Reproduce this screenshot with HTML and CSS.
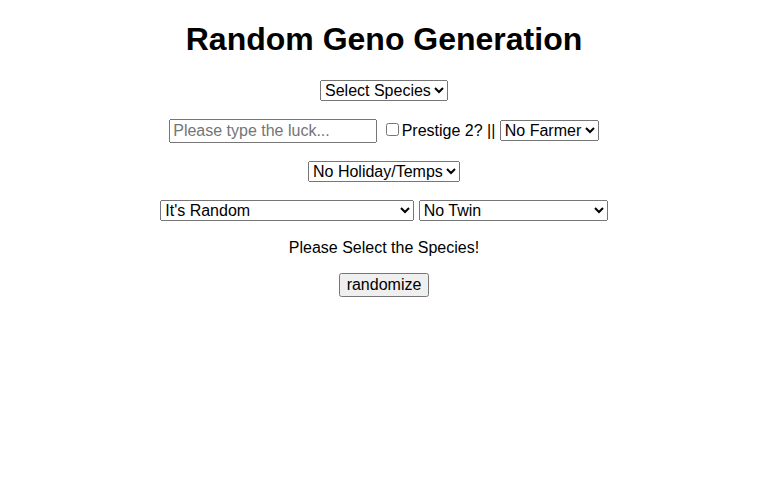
FILE: index.html
```html
<!DOCTYPE html>
<html>
<head>
<meta charset="utf-8">
<link rel="stylesheet" href="styles.css">
</head>
<body>
<h1 class="title">Random Geno Generation</h1>
<div class="row"><select class="ctl"><option>Select Species</option></select></div>
<div class="row"><input class="ctl luck" type="text" placeholder="Please type the luck..."> <input type="checkbox" class="chk">Prestige 2? || <select class="ctl"><option>No Farmer</option></select></div>
<div class="row"><select class="ctl"><option>No Holiday/Temps</option></select></div>
<div class="row"><select class="ctl gen"><option>It's Random</option></select> <select class="ctl twin"><option>No Twin</option></select></div>
<div class="row msg">Please Select the Species!</div>
<div class="row"><button class="ctl btn">randomize</button></div>
</body>
</html>
```
FILE: styles.css
```css
body {
  margin: 0 8px 8px;
  font-family: "Liberation Sans", Arial, sans-serif;
  font-size: 16px;
  text-align: center;
  color: #000;
  background: #fff;
}
.title {
  font-size: 32px;
  margin: 21px 0 22px;
}
.row {
  margin: 0 0 18px;
}
.row.msg {
  margin-bottom: 16px;
}
.ctl {
  font-family: "Liberation Sans", Arial, sans-serif;
  font-size: 16px;
}
.luck { width: 200px; }
.gen { width: 254px; }
.twin { width: 189px; }
```
